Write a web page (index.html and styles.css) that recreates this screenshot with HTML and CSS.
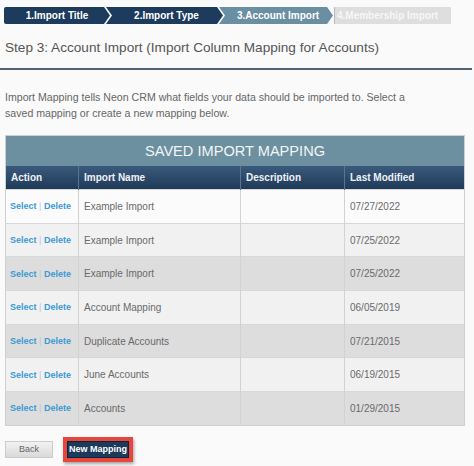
FILE: index.html
```html
<!DOCTYPE html>
<html>
<head>
<meta charset="utf-8">
<link rel="stylesheet" href="styles.css">
</head>
<body>
<div class="page">
  <div class="steps">
    <div class="step step-first done">1.Import Title</div>
    <div class="step done s2">2.Import Type</div>
    <div class="step current">3.Account Import</div>
    <div class="step todo">4.Membership Import</div>
  </div>
  <h1 class="title">Step 3: Account Import (Import Column Mapping for Accounts)</h1>
  <div class="rule"></div>
  <p class="intro">Import Mapping tells Neon CRM what fields your data should be imported to. Select a saved mapping or create a new mapping below.</p>
  <table class="grid">
    <colgroup>
      <col class="c-act">
      <col class="c-name">
      <col class="c-desc">
      <col class="c-date">
    </colgroup>
    <thead>
      <tr><th class="caption" colspan="4">SAVED IMPORT MAPPING</th></tr>
      <tr class="heads">
        <th>Action</th>
        <th>Import Name</th>
        <th>Description</th>
        <th>Last Modified</th>
      </tr>
    </thead>
    <tbody>
      <tr class="r1"><td class="act"><a>Select</a> <span class="sep">|</span> <a>Delete</a></td><td>Example Import</td><td></td><td>07/27/2022</td></tr>
      <tr class="r2"><td class="act"><a>Select</a> <span class="sep">|</span> <a>Delete</a></td><td>Example Import</td><td></td><td>07/25/2022</td></tr>
      <tr class="r3"><td class="act"><a>Select</a> <span class="sep">|</span> <a>Delete</a></td><td>Example Import</td><td></td><td>07/25/2022</td></tr>
      <tr class="r2"><td class="act"><a>Select</a> <span class="sep">|</span> <a>Delete</a></td><td>Account Mapping</td><td></td><td>06/05/2019</td></tr>
      <tr class="r3"><td class="act"><a>Select</a> <span class="sep">|</span> <a>Delete</a></td><td>Duplicate Accounts</td><td></td><td>07/21/2015</td></tr>
      <tr class="r2"><td class="act"><a>Select</a> <span class="sep">|</span> <a>Delete</a></td><td>June Accounts</td><td></td><td>06/19/2015</td></tr>
      <tr class="r3"><td class="act"><a>Select</a> <span class="sep">|</span> <a>Delete</a></td><td>Accounts</td><td></td><td>01/29/2015</td></tr>
    </tbody>
  </table>
  <div class="actions">
    <button class="btn back">Back</button>
    <span class="highlight"><button class="btn primary">New Mapping</button></span>
  </div>
</div>
</body>
</html>
```
FILE: styles.css
```css
html, body {
  margin: 0;
  padding: 0;
  background: #fafafa;
}
.page {
  width: 474px;
  height: 466px;
  font-family: "Liberation Sans", Arial, sans-serif;
  overflow: hidden;
}
.steps {
  display: flex;
  padding: 7px 0 0 4px;
  height: 17px;
}
.step {
  height: 17px;
  line-height: 17px;
  font-size: 10px;
  font-weight: bold;
  color: #ffffff;
  text-align: center;
  margin-left: -4px;
  clip-path: polygon(0 0, calc(100% - 6px) 0, 100% 50%, calc(100% - 6px) 100%, 0 100%, 6px 50%);
  box-sizing: border-box;
}
.step-first {
  margin-left: 0;
  width: 106px;
  clip-path: polygon(0 0, calc(100% - 6px) 0, 100% 50%, calc(100% - 6px) 100%, 0 100%);
  border-radius: 2px 0 0 2px;
}
.done { background: #1d3b5c; }
.s2 { width: 117px; padding-left: 4px; }
.current { background: #6a8ea2; width: 114px; padding-left: 4px; }
.todo {
  background: #dedede;
  color: #f7f7f7;
  width: 117px;
  clip-path: none;
  margin-left: 1px;
  border-left: 1px solid #b9b9b9;
  text-align: left;
  padding-left: 2px;
}
.title {
  margin: 16px 0 0 5px;
  font-size: 13.6px;
  font-weight: normal;
  color: #555555;
  line-height: 16px;
}
.rule {
  margin: 12px 2px 0 0;
  height: 2px;
  background: #53626f;
}
.intro {
  margin: 19px 0 0 5px;
  width: 400px;
  font-size: 10.6px;
  line-height: 16px;
  color: #666666;
}
.grid {
  margin: 14px 0 0 5px;
  width: 459px;
  border-collapse: collapse;
  table-layout: fixed;
  border: 1px solid #cfcfcf;
}
.c-act { width: 73px; }
.c-name { width: 162px; }
.c-desc { width: 104px; }
.c-date { width: 120px; }
.grid th, .grid td {
  padding: 0 0 0 5px;
  text-align: left;
  white-space: nowrap;
  overflow: hidden;
}
.grid .caption {
  height: 30px;
  background: #6c909f;
  color: #f2f6f8;
  font-size: 14.6px;
  font-weight: normal;
  text-align: center;
  padding: 0;
}
.heads th {
  height: 23px;
  background: linear-gradient(#3a5a7c, #1f3a58);
  color: #eef2f6;
  font-size: 10px;
  font-weight: bold;
  border-left: 1px solid #5a7390;
}
.heads th:first-child { border-left: none; }
.grid td {
  height: 32.7px;
  font-size: 10px;
  color: #6a6a6a;
  border-left: 1px solid #d2d2d2;
  border-top: 1px solid #d8d8d8;
}
.grid td:first-child { border-left: none; }
.r1 td { background: #fbfbfb; }
.r2 td { background: #f1f1f1; }
.r3 td { background: #dddddd; }
.grid .act {
  font-size: 9px;
  padding-left: 4px;
}
.act a {
  color: #3b9ad2;
  font-weight: bold;
}
.act .sep {
  color: #b8c8d4;
}
.actions {
  display: flex;
  align-items: center;
  margin: 11px 0 0 5px;
  gap: 10px;
}
.btn {
  font-family: "Liberation Sans", Arial, sans-serif;
  font-size: 9px;
  margin: 0;
  padding: 0;
  cursor: pointer;
}
.back {
  width: 48px;
  height: 17px;
  background: linear-gradient(#f2f2f2, #d9d9d9);
  border: 1px solid #cccccc;
  color: #666666;
}
.highlight {
  display: flex;
  padding: 2px;
  border: 2px solid #e5473d;
  box-shadow: 1px 2px 3px rgba(0,0,0,0.35);
  background: #e5473d;
}
.primary {
  width: 62px;
  height: 17px;
  background: #1d3a5b;
  color: #ffffff;
  font-weight: bold;
  border: 1px solid #0f2338;
}
```
